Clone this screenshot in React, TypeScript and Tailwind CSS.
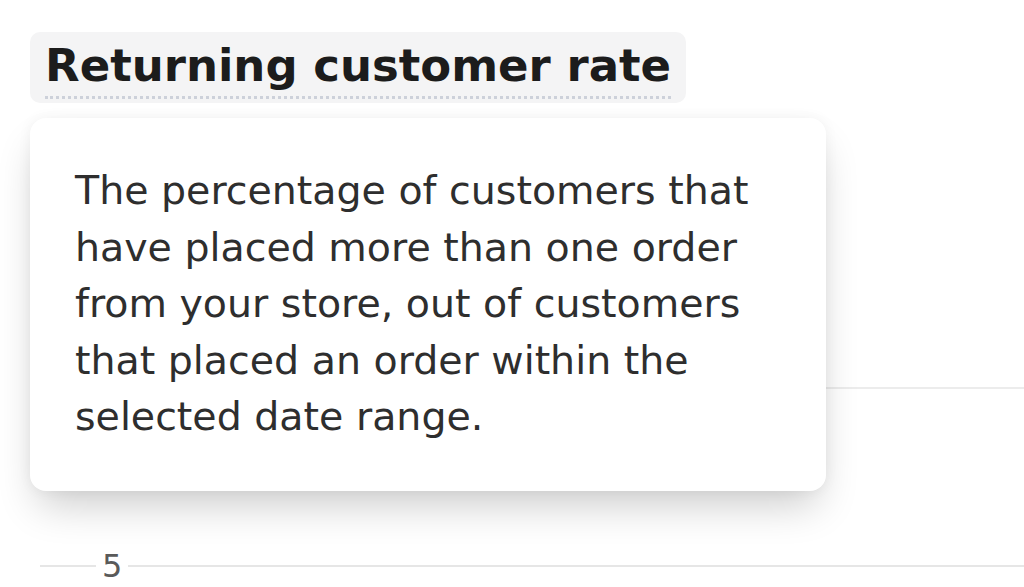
const App = () => {
  return (
    <div className="relative h-[587px] w-[1024px] overflow-hidden bg-white font-['DejaVu_Sans',sans-serif]">
      {/* metric title with dotted hint underline */}
      <div className="pl-[30px] pt-[32px]">
        <div className="inline-block rounded-[10px] bg-[#f4f4f5] px-[15px] pt-[8px] pb-[4px]">
          <div className="border-b-[3px] border-dotted border-[#cdd1da] pb-[4px] text-[45px] font-bold leading-[52px] text-[#1c1c1c]">
            Returning customer rate
          </div>
        </div>
      </div>

      {/* chart grid */}
      <div className="mt-[284px] flex flex-col pl-[40px]">
        <div className="h-[2px] bg-[#ececec]" />
        <div className="mt-[160px] flex items-center">
          <div className="h-[2px] w-[56px] bg-[#e6e6e6]" />
          <span className="px-[6px] text-[32px] leading-[34px] text-[#5a5a5a]">5</span>
          <div className="h-[2px] flex-1 bg-[#e6e6e6]" />
        </div>
      </div>

      {/* tooltip */}
      <div className="absolute left-[30px] top-[118px] h-[373px] w-[796px] rounded-[16px] bg-white px-[45px] pt-[44px] shadow-[0_22px_40px_-8px_rgba(0,0,0,0.2),0_0_14px_rgba(0,0,0,0.05)]">
        <p className="text-[39.5px] leading-[56.5px] text-[#2e2e2e]">
          The percentage of customers that have placed more than one order from your store, out of customers that placed an order within the selected date range.
        </p>
      </div>
    </div>
  );
};

export default App;
